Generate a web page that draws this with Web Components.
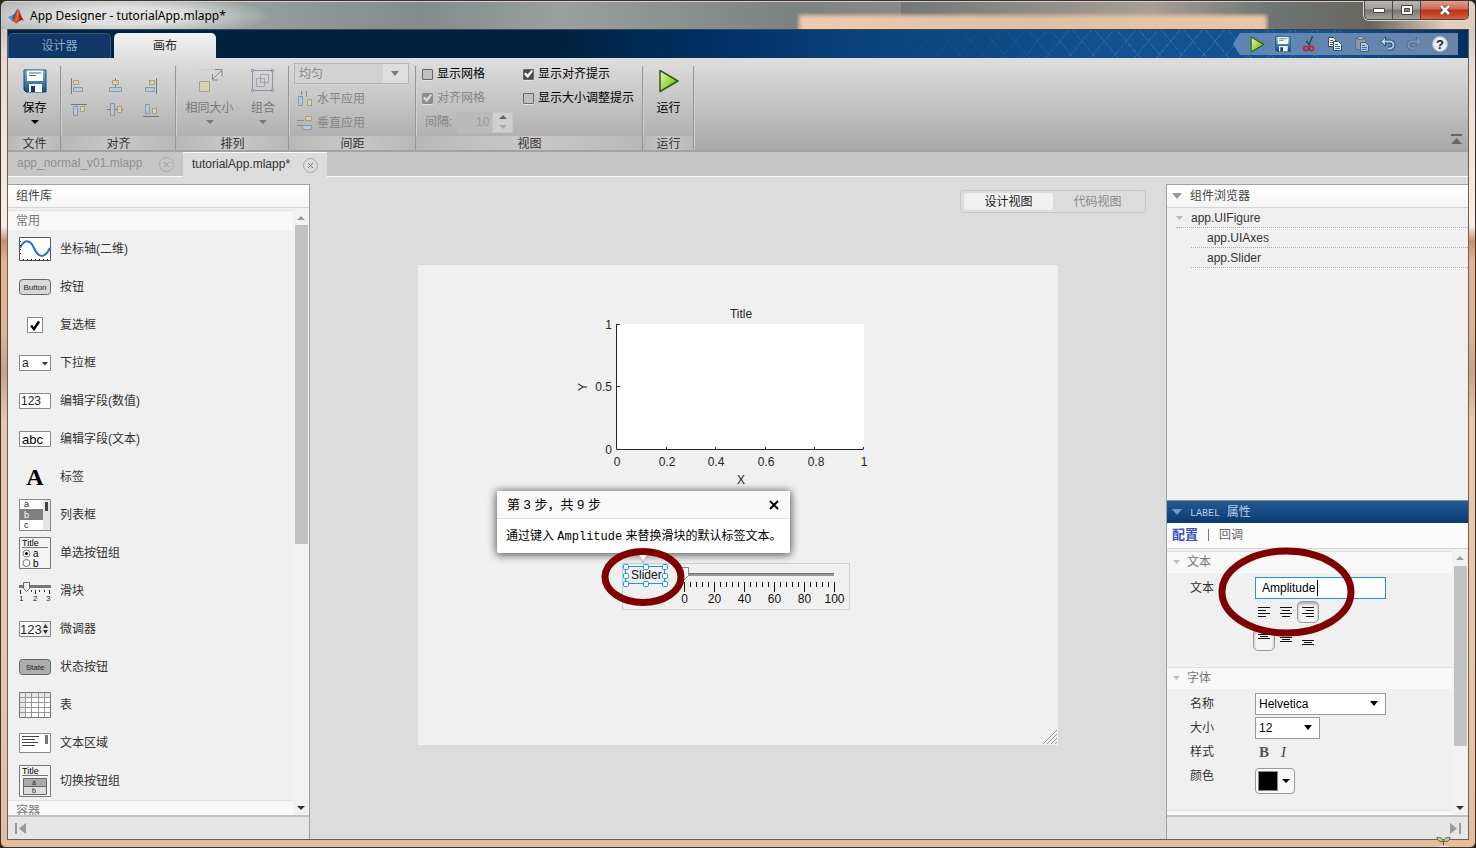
<!DOCTYPE html>
<html lang="zh-CN">
<head>
<meta charset="utf-8">
<title>App Designer - tutorialApp.mlapp*</title>
<style>
  html, body { margin: 0; height: 100%; }
  body {
    font: 12px/16px "Liberation Sans", "Noto Sans CJK SC", sans-serif;
    color: #333;
    overflow: hidden;
    background: #2b2522;
  }
</style>
</head>
<body>
<app-window>
  <title-bar slot="title">App Designer - tutorialApp.mlapp*</title-bar>
  <ribbon-tabs></ribbon-tabs>
  <tool-ribbon></tool-ribbon>
  <doc-tabs></doc-tabs>
  <work-area>
    <component-library slot="left"></component-library>
    <design-canvas></design-canvas>
    <side-stack slot="right"></side-stack>
  </work-area>
</app-window>

<script>
// shared by every shadow root
const base = `
  :host, *, *::before, *::after { box-sizing: border-box; }
  button, input, select { font: inherit; color: inherit; margin: 0; }
  button { padding: 0; border: 0; background: none; }
  svg { display: block; }
  svg text { font-family: "Liberation Sans", sans-serif; }
`;

function define(name, css, html) {
  customElements.define(name, class extends HTMLElement {
    constructor() {
      super();
      const template = document.createElement('template');
      template.innerHTML = `<style>${base}${css}</style>${html}`;
      this.attachShadow({ mode: 'open' }).appendChild(template.content.cloneNode(true));
    }
  });
}

const arrow = (w, h, color) => `<svg width="${w}" height="${h}" viewBox="0 0 ${w} ${h}"><path d="M0 0h${w}L${w / 2} ${h}z" fill="${color}"/></svg>`;
const play = (w, h) => `<svg width="${w}" height="${h}" viewBox="0 0 20 24">
  <defs><linearGradient id="g" x1="0" y1="0" x2="1" y2="1"><stop offset="0" stop-color="#e8f7c0"/><stop offset=".5" stop-color="#a5d751"/><stop offset="1" stop-color="#5aa516"/></linearGradient></defs>
  <path d="M1 1.5 19 12 1 22.500z" fill="url(#g)" stroke="#2c5a16" stroke-width="1.5" stroke-linejoin="round"/></svg>`;
const disk = (s) => `<svg width="${s}" height="${s}" viewBox="0 0 24 24">
  <defs><linearGradient id="d" x1="0" y1="0" x2="0" y2="1"><stop offset="0" stop-color="#7cbde6"/><stop offset="1" stop-color="#174b74"/></linearGradient></defs>
  <path d="M1 1h22v22H3l-2-2z" fill="url(#d)" stroke="#16466d"/>
  <path d="M4 1.500h16V12H4z" fill="#fff"/><path d="M6 4h12M6 6.500h7" stroke="#456a8c" stroke-width="1.200"/>
  <path d="M6 15h13v8H6z" fill="#f4f7fa"/><path d="M8 17h4v6H8z" fill="#123c60"/></svg>`;

define('app-window', `
  :host {
    display: flex; flex-direction: column; height: 100vh;
    border: 1px solid #3b3330; border-radius: 7px 7px 6px 6px; overflow: hidden;
    padding: 0 7px 7px; position: relative;
    background: linear-gradient(#b9bab8 0, #e6dcd4 60px, #f6e9e0 190px, #f9eee6 225px, #c98f69 240px, #e3b38f 260px, #dfb591 330px, #c9a188 370px, #e9c8ad 420px, #e8c6ac 75%, #e4bd9f);
  }
  .frame { flex: 1; min-height: 0; display: flex; flex-direction: column; border: 1px solid #6b6058; border-top-color: #444; background: #dcdcdc; margin: 0 -1px 0 -1px; }
  .sprout { position: absolute; right: 24px; bottom: 0; }
`, `
  <slot name="title"></slot>
  <div class="frame"><slot></slot></div>
  <svg class="sprout" width="15" height="11" viewBox="0 0 15 11">
    <path d="M7.500 10V5" stroke="#7a4b33"/><path d="M7 5.500C2 6 1 3 1 1.500c4-.5 6 1 6 4zM8 5.500c5 .5 6-2.500 6-4-4-.5-6 1-6 4z" fill="#9be08a" stroke="#74543a"/>
    <path d="M1 11c3-2 10-2 13 0z" fill="#efe0dc"/>
  </svg>
`);

define('title-bar', `
  :host {
    display: flex; align-items: center; flex: none; height: 28px; margin: 0 -7px; padding-left: 7px;
    color: #000; font-family: "Noto Sans", sans-serif; position: relative;
    border-top: 1px solid #d9cfca;
    background:
      radial-gradient(ellipse 150px 22px at 120px 14px, #dfe0df 40%, transparent),
      linear-gradient(90deg, #b5b8b8 0, #97a0a0 240px, #838b8c 420px, #9aa0a0 560px, #7b8281 790px, #8b8987 900px, #727776 60%, #a99f95 78%, #6e7674 86%, #68665f 93%, #e3cdbb 98%);
  }
  svg.logo { margin-right: 6px; }
  /* window behind, seen through the glass */
  .behind { position: absolute; left: 54%; right: 14%; top: 11px; bottom: 0; overflow: hidden; }
  .behind::before { content: ""; position: absolute; inset: 2px 2px -8px; background: linear-gradient(90deg, #edcbb0, #dfc0a4 50%, #eac7a9); filter: blur(2px); }
  .buttons { position: absolute; right: 6px; top: -1px; display: flex; border: 1px solid #4c4a48; border-top: 0; border-radius: 0 0 5px 5px; overflow: hidden; box-shadow: 0 0 0 1px #ddd5cf; }
  .buttons button { width: 28px; height: 18px; display: grid; place-items: center; background: linear-gradient(#b9b8b5, #a09d99 45%, #77736f 50%, #a7a19b); border-right: 1px solid #4c4a48; }
  .buttons .close { width: 47px; border: 0; background: linear-gradient(#dd9f8c, #cd6b54 45%, #bb2f19 50%, #d6603c); }
`, `
  <div class="behind"></div>
  <svg class="logo" width="16" height="16" viewBox="0 0 16 16">
    <path d="M0 9 5 7l2 2-3 4z" fill="#4a9ad4"/><path d="M5 7c2-1 3-5 5-6.500L8 9 4 13z" fill="#2c5f9e"/>
    <path d="M10 .5c2 2 3 8 6 12-2-1-3-1-5 1-1 1-2 2-3 2-1-1-2-2-4-2.500C7 11 8.500 4 10 .5z" fill="#d9481c"/>
    <path d="M10 1c-.5 4-1 9-2.500 12C9 12 11 8 10 1z" fill="#f6a63a"/><path d="M10.500 2c1 3 1.500 7 5.500 10.500-2-1-3-.5-4.500.5C12 9 11 5 10.500 2z" fill="#8f1d12"/>
  </svg>
  <slot></slot>
  <div class="buttons">
    <button aria-label="最小化"><svg width="12" height="5"><path d="M.5.500h11v4H.5z" fill="#fff" stroke="#444"/></svg></button>
    <button aria-label="最大化"><svg width="12" height="10"><path d="M.5.500h11v9H.5z" fill="#fff" stroke="#444"/><path d="M3.500 3.500h5v3h-5z" fill="#8a8783" stroke="#444"/></svg></button>
    <button class="close" aria-label="关闭"><svg width="12" height="10" viewBox="0 0 12 10"><path d="M2 1l8 8M10 1 2 9" stroke="#444" stroke-width="4"/><path d="M2 1l8 8M10 1 2 9" stroke="#fff" stroke-width="2.500"/></svg></button>
  </div>
`);

define('ribbon-tabs', `
  :host {
    display: flex; align-items: flex-end; flex: none; height: 28px;
    background:
      linear-gradient(90deg, #00223f 0, #00223f 38%, #003064 48%, #0b447f 60%, rgba(20, 84, 148, 0) 78%, rgba(0, 48, 98, 0) 90%, #002f5f),
      repeating-linear-gradient(50deg, rgba(120, 170, 210, .22) 0 1px, transparent 1px 17px),
      repeating-linear-gradient(-50deg, rgba(120, 170, 210, .22) 0 1px, transparent 1px 17px),
      #135291;
  }
  .tab { width: 102px; height: 25px; border-radius: 5px 5px 0 0; margin-right: 3px; }
  .tab.off { background: #0f3767; color: #92a9c2; border: 1px solid #3a597f; border-bottom: 0; width: 103px; }
  .tab.on { background: linear-gradient(#f3f3f3, #dfdfdf); color: #222; }
  .quick {
    margin: 0 10px 3px auto; width: 225px; height: 22px; padding: 0 8px 0 14px;
    display: flex; align-items: center; justify-content: space-between;
    background: linear-gradient(90deg, #5c86b6, #6a84a8); clip-path: polygon(7px 0, 100% 0, 100% 100%, 7px 100%, 0 50%);
  }
  .quick button { width: 20px; height: 20px; display: grid; place-items: center; }
`, `
  <button class="tab off">设计器</button><button class="tab on">画布</button>
  <div class="quick">
    <button aria-label="运行">${play(15, 17)}</button>
    <button aria-label="保存">${disk(16)}</button>
    <button aria-label="剪切"><svg width="12" height="16" viewBox="0 0 12 16"><path d="M9.500 0 6 9M3.500 5 7 10" stroke="#3c4247" stroke-width="1.500"/><circle cx="3" cy="12.500" r="2.200" fill="none" stroke="#c0202c" stroke-width="1.500"/><circle cx="8.500" cy="12.500" r="2.200" fill="none" stroke="#c0202c" stroke-width="1.500"/></svg></button>
    <button aria-label="复制"><svg width="14" height="14" viewBox="0 0 14 14"><path d="M.5.500h5l2 2v7h-7z" fill="#fff" stroke="#444"/><path d="M2 3.500h3M2 5.500h4M2 7.500h3" stroke="#555"/><path d="M5.500 4.500h5l3 3v6h-8z" fill="#eef6fc" stroke="#234d75"/><path d="M7 7.500h3M7 9.500h5M7 11.500h5" stroke="#2f6ca5"/></svg></button>
    <button aria-label="粘贴" disabled><svg width="14" height="16" viewBox="0 0 14 16"><path d="M.5 2.500h10v11H.5z" fill="#8b9aa8" stroke="#5c6e85"/><path d="M3 .5h5v3H3z" fill="#a4b0be" stroke="#5c6e85"/><path d="M5.500 6.500h5l3 3v6h-8z" fill="#b3c6da" stroke="#446083"/><path d="M7 9.500h3M7 11.500h5M7 13.500h5" stroke="#4b7199"/></svg></button>
    <button aria-label="撤消"><svg width="16" height="14" viewBox="0 0 16 14"><path d="M4 4.500h6a3.500 3.500 0 0 1 0 7H8" fill="none" stroke="#24486e" stroke-width="4"/><path d="M5.500 0v9L.5 4.500z" fill="#b5d9f2" stroke="#24486e"/><path d="M4 4.500h6a3.500 3.500 0 0 1 0 7H8" fill="none" stroke="#a9d0ed" stroke-width="2"/></svg></button>
    <button aria-label="重做" disabled><svg width="16" height="14" viewBox="0 0 16 14"><path d="M12 4.500H6a3.500 3.500 0 0 0 0 7h2" fill="none" stroke="#506f95" stroke-width="4"/><path d="M10.500 0v9l5-4.500z" fill="#7d9cbe" stroke="#506f95"/><path d="M12 4.500H6a3.500 3.500 0 0 0 0 7h2" fill="none" stroke="#7895b8" stroke-width="2"/></svg></button>
    <button aria-label="帮助"><svg width="16" height="16" viewBox="0 0 16 16"><circle cx="8" cy="8" r="7.500" fill="#e6eef5" stroke="#9fb8cd"/><text x="8" y="13" text-anchor="middle" font-size="13" font-weight="bold" fill="#222">?</text></svg></button>
  </div>
`);

define('ribbon-group', `
  :host { display: flex; flex-direction: column; position: relative; }
  :host::after { content: ""; position: absolute; right: -1px; top: 8px; bottom: 0; width: 2px; background: linear-gradient(90deg, #959595 50%, #d2d2d2 50%); }
  .body { flex: 1; min-height: 0; }
  .name { height: 14px; line-height: 17px; overflow: hidden; text-align: center; color: #333; background: linear-gradient(90deg, #b8b8b8, #c8c8c8 50%, #b8b8b8); }
`, `
  <div class="body"><slot></slot></div>
  <div class="name"><slot name="name"></slot></div>
`);

const blue = 'fill="#bcc7d4" stroke="#8798b0"', tan = 'fill="#d6d2b8" stroke="#a59f7c"';
const small = (inner) => `<svg width="16" height="16" viewBox="0 0 16 16">${inner}</svg>`;

define('tool-ribbon', `
  :host {
    display: flex; flex: none; height: 94px; position: relative;
    border-bottom: 2px solid #a2a2a2;
    background: linear-gradient(#dedede, #c9c9c9 40%, #a8a8a8);
  }
  .big { display: flex; flex-direction: column; align-items: center; width: 100%; height: 70px; color: #000; }
  .big .pic { height: 26px; margin: 10px 0 6px; display: grid; place-items: center; }
  .big .arr { height: 4px; margin-top: 4px; }
  .big:disabled { color: #777; }
  .file { width: 53px; } .align { width: 115px; } .arrange { width: 113px; }
  .space { width: 127px; } .view { width: 227px; } .run { width: 51px; }
  .grid { display: grid; grid-template-columns: repeat(3, 36px); grid-auto-rows: 24px; padding-top: 16px; }
  .grid button { display: grid; place-items: center; }
  .two { display: grid; grid-template-columns: 67px 40px; }
  .stack { display: flex; flex-direction: column; padding: 5px 0 0 5px; color: #858585; }
  .pick { position: relative; width: 115px; margin-bottom: 3px; }
  .pick select { appearance: none; width: 100%; height: 21px; padding: 0 4px; border: 1px solid #b4b4b4; border-radius: 0; background: linear-gradient(90deg, #d3d3d3 88px, #dedede 88px); color: #858585; opacity: 1; }
  .pick svg { position: absolute; right: 10px; top: 8px; }
  .act { display: flex; align-items: center; gap: 4px; height: 24px; padding-left: 3px; color: #858585; }
  .checks { display: grid; grid-template-columns: 101px 1fr; grid-auto-rows: 24px; align-items: center; padding: 4px 0 0 6px; color: #000; }
  label { display: flex; align-items: center; gap: 4px; white-space: nowrap; }
  label.dim { color: #858585; }
  input[type=checkbox] { appearance: none; width: 11px; height: 11px; border: 1px solid #666; border-radius: 1px; background: #c0c0c0; box-shadow: 0 1px 0 #e4e4e4; }
  input[type=checkbox]:checked { background: #4b4b4b; }
  input[type=checkbox]:checked::before { content: ""; display: block; height: 9px; background: #fff; clip-path: polygon(0 50%, 20% 32%, 40% 56%, 84% 4%, 100% 20%, 42% 96%); }
  input[type=checkbox]:disabled { background: #8c8c8c; border-color: #8c8c8c; }
  input[type=checkbox]:disabled::before { background: #ddd; }
  .spin { display: flex; align-items: center; padding-left: 3px; color: #858585; }
  .spin input { width: 35px; height: 21px; margin-left: 5px; padding: 0 3px; border: 0; background: #bababa; text-align: right; color: #999; }
  .spin div { display: flex; flex-direction: column; width: 21px; height: 21px; background: #cfcfcf; border: 1px solid #c4c4c4; }
  .spin button { flex: 1; display: grid; place-items: center; }
  .collapse { position: absolute; right: 6px; bottom: 5px; }
`, `
  <ribbon-group class="file">
    <button class="big"><span class="pic">${disk(24)}</span>保存<span class="arr">${arrow(8, 4, '#000')}</span></button>
    <span slot="name">文件</span>
  </ribbon-group>
  <ribbon-group class="align">
    <div class="grid">
      <button aria-label="左对齐" disabled>${small(`<path d="M.5 0v16" stroke="#777"/><path d="M2.500 2.500h5v4h-5z" ${tan}/><path d="M2.500 9.500h9v4h-9z" ${blue}/>`)}</button>
      <button aria-label="居中对齐" disabled>${small(`<path d="M8.500 0v14" stroke="#777"/><path d="M5.500 2.500h6v4h-6z" ${tan}/><path d="M2.500 9.500h12v4h-12z" ${blue}/>`)}</button>
      <button aria-label="右对齐" disabled>${small(`<path d="M13.500 0v16" stroke="#777"/><path d="M6.500 2.500h5v4h-5z" ${tan}/><path d="M2.500 9.500h9v4h-9z" ${blue}/>`)}</button>
      <button aria-label="顶端对齐" disabled>${small(`<path d="M0 2.500h16" stroke="#777"/><path d="M2.500 4.500h4v9h-4z" ${blue}/><path d="M9.500 4.500h4v5h-4z" ${tan}/>`)}</button>
      <button aria-label="中间对齐" disabled>${small(`<path d="M0 7.500h16" stroke="#777"/><path d="M3.500 1.500h4v12h-4z" ${blue}/><path d="M10.500 4.500h4v6h-4z" ${tan}/>`)}</button>
      <button aria-label="底端对齐" disabled>${small(`<path d="M0 14.500h16" stroke="#777"/><path d="M2.500 2.500h4v9h-4z" ${blue}/><path d="M9.500 6.500h4v5h-4z" ${tan}/>`)}</button>
    </div>
    <span slot="name">对齐</span>
  </ribbon-group>
  <ribbon-group class="arrange">
    <div class="two">
      <button class="big" disabled><span class="pic"><svg width="26" height="26" viewBox="0 0 26 26"><path d="M2.500 13.500h10v10h-10z" ${tan}/><path d="M2.500 1.500h22v13" fill="none" stroke="#bbb" stroke-dasharray="1 2"/><path d="M15.500 11.500l9-9M18 1.500h7v7M15.500 6v6H21" fill="none" stroke="#888"/></svg></span>相同大小<span class="arr">${arrow(8, 4, '#777')}</span></button>
      <button class="big" disabled><span class="pic"><svg width="26" height="26" viewBox="0 0 26 26"><path d="M2.500 2.500h20v20h-20z" fill="none" stroke="#8795aa"/><path d="M6.500 10.500h8v8h-8zM10.500 6.500h8v8h-8z" fill="none" stroke="#a2a6aa"/><path d="M1.500 1.500h2v2h-2zM21.500 1.500h2v2h-2zM1.500 21.500h2v2h-2zM21.500 21.500h2v2h-2z" fill="#d3dae3" stroke="#8795aa"/></svg></span>组合<span class="arr">${arrow(8, 4, '#777')}</span></button>
    </div>
    <span slot="name">排列</span>
  </ribbon-group>
  <ribbon-group class="space">
    <div class="stack">
      <div class="pick"><select aria-label="间距" disabled><option>均匀</option></select>${arrow(8, 5, '#777')}</div>
      <button class="act" disabled>${small(`<path d="M4.500 0v4M9.500 0v6" stroke="#888"/><path d="M1.500 5.500h4v9h-4z" ${blue}/><path d="M10.500 8.500h4v6h-4z" ${tan}/>`)}水平应用</button>
      <button class="act" disabled>${small(`<path d="M0 5.500h7M0 10.500h5" stroke="#888"/><path d="M8.500 1.500h6v4h-6z" ${tan}/><path d="M5.500 10.500h9v4h-9z" ${blue}/>`)}垂直应用</button>
    </div>
    <span slot="name">间距</span>
  </ribbon-group>
  <ribbon-group class="view">
    <div class="checks">
      <label><input type="checkbox">显示网格</label>
      <label><input type="checkbox" checked>显示对齐提示</label>
      <label class="dim"><input type="checkbox" checked disabled>对齐网格</label>
      <label><input type="checkbox">显示大小调整提示</label>
      <div class="spin"><label class="dim" for="gap">间隔:</label><input id="gap" value="10" disabled>
        <div><button aria-label="增加"><svg width="8" height="4"><path d="M0 4h8L4 0z" fill="#666"/></svg></button><button aria-label="减少">${arrow(8, 4, '#aaa')}</button></div></div>
    </div>
    <span slot="name">视图</span>
  </ribbon-group>
  <ribbon-group class="run">
    <button class="big"><span class="pic">${play(20, 24)}</span>运行</button>
    <span slot="name">运行</span>
  </ribbon-group>
  <button class="collapse" aria-label="折叠"><svg width="11" height="11"><path d="M0 0h11v2H0zM0 10h11L5.500 4z" fill="#666"/></svg></button>
`);

define('doc-tabs', `
  :host { display: flex; flex: none; height: 25px; background: #c6c6c6; }
  .tab { display: flex; align-items: center; gap: 9px; padding: 0 9px; color: #8f8f8f; border-bottom: 1px solid #fff; width: 175px; }
  .tab.on { background: #dcdcdc; color: #333; border: 0; border-top: 1px solid #fff; width: 144px; }
  a { color: inherit; text-decoration: none; flex: 1; line-height: 16px; padding-bottom: 2px; }
  .rest { flex: 1; border-bottom: 1px solid #fff; }
`, `
  <div class="tab"><a href="#">app_normal_v01.mlapp</a><button aria-label="关闭"><svg width="15" height="15"><circle cx="7.500" cy="7.500" r="7" fill="none" stroke="#aaa"/><path d="M5 5l5 5M10 5l-5 5" stroke="#999"/></svg></button></div>
  <div class="tab on"><a href="#">tutorialApp.mlapp*</a><button aria-label="关闭"><svg width="15" height="15"><circle cx="7.500" cy="7.500" r="7" fill="none" stroke="#aaa"/><path d="M5 5l5 5M10 5l-5 5" stroke="#777"/></svg></button></div>
  <div class="rest"></div>
`);

define('work-area', `
  :host { flex: 1; min-height: 0; display: grid; grid-template-columns: 302px 1fr 302px; grid-template-rows: 100%; }
`, `<slot name="left"></slot><slot></slot><slot name="right"></slot>`);

define('scroll-rail', `
  :host { display: flex; flex-direction: column; align-items: center; width: 16px; background: #f2f2f2; }
  .end { height: 15px; display: grid; place-items: center; }
  .track { flex: 1; width: 13px; min-height: 0; }
  .thumb { height: var(--thumb, 50%); background: #c1c1c1; }
`, `
  <div class="end"><svg width="8" height="4"><path d="M0 4h8L4 0z" fill="#999"/></svg></div>
  <div class="track"><div class="thumb"></div></div>
  <div class="end">${arrow(8, 4, '#333')}</div>
`);

// palette pictures, all on a 32x32 grid
const pictures = {
  axes: `<path d="M.5 4.500h31v23H.5z" fill="#fff" stroke="#555"/><path d="M1 15C5 6 11 6 15 15s10 12 16 0" fill="none" stroke="#2b70b8" stroke-width="2"/><path d="M4.500 26v2M8.500 26v2M12.500 26v2M16.500 26v2M20.500 26v2M24.500 26v2M28.500 26v2M1 8.500h1M1 12.500h1M1 16.500h1M1 20.500h1" stroke="#222"/>`,
  button: `<rect x=".5" y="8.500" width="31" height="15" rx="3" fill="#d9d9d9" stroke="#666"/><text x="16" y="19" font-size="8" text-anchor="middle" fill="#222">Button</text>`,
  check: `<path d="M8.500 8.500h15v15h-15z" fill="#fff" stroke="#888"/><path d="M12 16.500l3 3.500 5-7.500" fill="none" stroke="#000" stroke-width="2.500"/>`,
  drop: `<path d="M.5 8.500h31v15H.5z" fill="#fff" stroke="#888"/><text x="3" y="20" font-size="12" fill="#222">a</text><path d="M23 15h6l-3 3.500z" fill="#333"/>`,
  number: `<path d="M.5 8.500h31v15H.5z" fill="#fff" stroke="#888"/><text x="2" y="20" font-size="12" fill="#222">123</text>`,
  edit: `<path d="M.5 8.500h31v15H.5z" fill="#fff" stroke="#888"/><text x="3" y="21" font-size="13" fill="#000">abc</text>`,
  label: `<text x="16" y="24" font-size="24" text-anchor="middle" fill="#000" style="font-family:'Liberation Serif',serif;font-weight:bold">A</text>`,
  list: `<path d="M.5.500h31v31H.5z" fill="#fff" stroke="#888"/><path d="M1 10h23v11H1z" fill="#808080"/><path d="M24 1h7v30h-7z" fill="#e4e4e4"/><path d="M26 3h3v9h-3z" fill="#444"/><g font-size="9"><text x="5" y="8" fill="#222">a</text><text x="5" y="19" fill="#fff">b</text><text x="5" y="29" fill="#222">c</text></g>`,
  radio: `<path d="M.5.500h31v31H.5z" fill="#f4f4f4" stroke="#777"/><text x="3" y="9" font-size="9" fill="#000">Title</text><path d="M3 10.500h26" stroke="#777"/><circle cx="7.500" cy="16.500" r="3.500" fill="#fff" stroke="#777"/><circle cx="7.500" cy="16.500" r="1.500"/><circle cx="7.500" cy="26" r="3.500" fill="#fff" stroke="#777"/><g font-size="10"><text x="14" y="20">a</text><text x="14" y="30">b</text></g>`,
  slider: `<path d="M0 10h32v3H0z" fill="#777"/><path d="M4.500 7.500h6v6l-3 3-3-3z" fill="#eee" stroke="#666"/><path d="M1.500 15v4M16.500 15v4M30.500 15v4M12.500 15v2M20.500 15v2M25.500 15v2" stroke="#333"/><g font-size="8" fill="#222"><text x="0" y="26">1</text><text x="14" y="26">2</text><text x="27" y="26">3</text></g>`,
  spinner: `<path d="M.5 8.500h31v15H.5z" fill="#fff" stroke="#888"/><path d="M23 9h8v14h-8z" fill="#e8e8e8"/><text x="1" y="21" font-size="13" fill="#222">123</text><path d="M24 15h5l-2.500-4zM24 17h5l-2.500 4z" fill="#333"/>`,
  state: `<rect x=".5" y="8.500" width="31" height="15" rx="3" fill="#adadad" stroke="#666"/><text x="16" y="19" font-size="8" text-anchor="middle" fill="#222">State</text>`,
  table: `<path d="M.5 3.500h31v25H.5z" fill="#fff" stroke="#777"/><path d="M1 4h30v5H6v19H1z" fill="#e6e6e6"/><path d="M6.500 4v24M12.500 4v24M19.500 4v24M25.500 4v24M1 8.500h30M1 13.500h30M1 18.500h30M1 23.500h30" stroke="#999"/>`,
  area: `<path d="M.5 6.500h31v19H.5z" fill="#fff" stroke="#888"/><path d="M3 9.500h17M3 12.500h13M3 15.500h16M3 18.500h13" stroke="#444"/><path d="M26 8h3v9h-3z" fill="#777"/>`,
  toggle: `<path d="M.5.500h31v31H.5z" fill="#f4f4f4" stroke="#777"/><text x="3" y="9" font-size="9" fill="#000">Title</text><path d="M3 10.500h26" stroke="#777"/><path d="M4.500 13.500h23v8h-23z" fill="#aaa" stroke="#666"/><path d="M4.500 21.500h23v8h-23z" fill="#ddd" stroke="#666"/><g font-size="7" text-anchor="middle" fill="#222"><text x="15" y="20">a</text><text x="15" y="28">b</text></g>`
};

class PaletteItem extends HTMLElement {
  constructor() {
    super();
    this.attachShadow({ mode: 'open' });
  }
  connectedCallback() {
    this.shadowRoot.innerHTML = `
      <style>${base}
        :host { display: flex; align-items: center; gap: 9px; height: 38px; padding-left: 11px; color: #333; }
      </style>
      <svg width="32" height="32" viewBox="0 0 32 32">${pictures[this.getAttribute('picture')]}</svg>
      <span><slot></slot></span>`;
  }
}
customElements.define('palette-item', PaletteItem);

define('component-library', `
  :host { display: flex; flex-direction: column; min-height: 0; margin-top: 7px; border: 1px solid #a0a0a0; border-width: 1px 1px 0 0; background: #f0f0f0; }
  h2 { margin: 0 0 2px; font: inherit; height: 23px; line-height: 23px; padding-left: 8px; background: linear-gradient(#fff, #f5f5f5); border-bottom: 1px solid #d4d4d4; color: #444; flex: none; }
  .body { flex: 1; min-height: 0; display: flex; }
  .items { flex: 1; overflow: hidden; }
  h3 { margin: 0; font: inherit; height: 20px; line-height: 21px; padding-left: 8px; background: #f8f8f8; border-top: 1px solid #e4e4e4; color: #777; }
  scroll-rail { --thumb: 55.5%; }
  .foot { flex: none; height: 24px; border-top: 2px solid #c0c0c0; background: #e6e6e6; display: flex; align-items: center; padding-left: 7px; }
`, `
  <h2>组件库</h2>
  <div class="body">
    <div class="items">
      <h3>常用</h3>
      <palette-item picture="axes">坐标轴(二维)</palette-item>
      <palette-item picture="button">按钮</palette-item>
      <palette-item picture="check">复选框</palette-item>
      <palette-item picture="drop">下拉框</palette-item>
      <palette-item picture="number">编辑字段(数值)</palette-item>
      <palette-item picture="edit">编辑字段(文本)</palette-item>
      <palette-item picture="label">标签</palette-item>
      <palette-item picture="list">列表框</palette-item>
      <palette-item picture="radio">单选按钮组</palette-item>
      <palette-item picture="slider">滑块</palette-item>
      <palette-item picture="spinner">微调器</palette-item>
      <palette-item picture="state">状态按钮</palette-item>
      <palette-item picture="table">表</palette-item>
      <palette-item picture="area">文本区域</palette-item>
      <palette-item picture="toggle">切换按钮组</palette-item>
      <h3>容器</h3>
    </div>
    <scroll-rail></scroll-rail>
  </div>
  <div class="foot"><button aria-label="折叠"><svg width="11" height="11"><path d="M0 0h2v11H0zM11 0v11L4 5.500z" fill="#999"/></svg></button></div>
`);

define('axes-plot', `
  :host { display: block; }
  text { font-size: 12px; fill: #262626; }
`, `
  <svg width="310" height="190" viewBox="0 0 310 190">
    <path d="M47 24h247v125H47z" fill="#fff"/>
    <path d="M46.500 24v125.500h247M47 24.500h3M47 86.500h3M96.500 147v2M145.500 147v2M195.500 147v2M244.500 147v2M293.500 147v2" fill="none" stroke="#262626"/>
    <text x="171" y="18" text-anchor="middle">Title</text>
    <g text-anchor="end"><text x="42" y="29">1</text><text x="42" y="91">0.5</text><text x="42" y="154">0</text></g>
    <g text-anchor="middle">
      <text x="47" y="166">0</text><text x="97" y="166">0.2</text><text x="146" y="166">0.4</text>
      <text x="196" y="166">0.6</text><text x="246" y="166">0.8</text><text x="294" y="166">1</text>
      <text x="171" y="184">X</text><text transform="translate(17 87) rotate(-90)">Y</text>
    </g>
  </svg>
`);

define('slider-widget', `
  :host { display: block; width: 228px; height: 47px; border: 1px solid #cfd3d6; border-left-color: #a9d3f2; }
  input { appearance: none; position: absolute; left: 56px; top: 3px; width: 160px; height: 14px; background: linear-gradient(#777 1px, #999 1px) 5px 6px / 150px 3px no-repeat; }
  input::-webkit-slider-thumb { appearance: none; width: 10px; height: 14px; background: url("data:image/svg+xml,%3Csvg xmlns='http://www.w3.org/2000/svg' width='10' height='14'%3E%3Cpath d='M.5.5h9v8L5 13 .5 8.500z' fill='%23f6f6f6' stroke='%23888'/%3E%3C/svg%3E"); }
  .ticks { position: absolute; left: 50px; top: 18px; }
  .ticks text { font-size: 12px; fill: #111; }
  .label { position: absolute; left: 1px; top: 1px; width: 42px; height: 20px; padding-left: 7px; line-height: 20px; color: #111; }
  .label svg { position: absolute; left: 0; top: 0; overflow: visible; }
`, `
  <input id="s" type="range" min="0" max="100" value="0">
  <svg class="ticks" width="176" height="26" viewBox="0 0 176 26"></svg>
  <label class="label" for="s">Slider<svg width="42" height="20"><path d="M1.500 1.500h39v17h-39z" fill="none" stroke="#1a94e6"/><g class="grips" fill="#fff" stroke="#1a94e6"></g></svg></label>
`);

// ticks every 4 units, a long one with its number every 20
class TickedSlider extends customElements.get('slider-widget') {
  connectedCallback() {
    const root = this.shadowRoot;
    let marks = '';
    for (let v = 0; v <= 100; v += 4) {
      const x = 11.5 + v * 1.5;
      const major = v % 20 === 0;
      marks += `<path d="M${x} 0v${major ? 10 : 5}" stroke="#111"/>`;
      if (major) marks += `<text x="${x}" y="21" text-anchor="middle">${v}</text>`;
    }
    root.querySelector('.ticks').innerHTML = marks;
    let grips = '';
    for (const y of [1.5, 10.5, 18.5]) {
      for (const x of [1.5, 21.5, 40.5]) {
        if (x !== 21.5 || y !== 10.5) grips += `<rect x="${x - 2}" y="${y - 2}" width="5" height="5" rx="1"/>`;
      }
    }
    root.querySelector('.grips').innerHTML = grips;
  }
}
customElements.define('ticked-slider', TickedSlider);

define('coach-tip', `
  :host { display: block; width: 293px; background: #fff; box-shadow: 0 1px 8px 1px rgba(0, 0, 0, .65); color: #000; border-radius: 2px; }
  header { display: flex; justify-content: space-between; align-items: center; height: 28px; padding: 0 11px 0 10px; background: #f9f9f9; border-bottom: 1px solid #e2e2e2; font-size: 13px; }
  p { display: flex; align-items: center; height: 34px; margin: 0; padding: 0 9px; white-space: pre; }
`, `
  <header><slot name="step"></slot><button aria-label="关闭"><svg width="10" height="10"><path d="M1 1l8 8M9 1 1 9" stroke="#000" stroke-width="2"/></svg></button></header>
  <p><span><slot></slot></span></p>
`);

define('design-canvas', `
  :host { display: flex; flex-direction: column; min-width: 0; background: #dcdcdc; }
  .views { align-self: flex-end; display: flex; margin: 13px 20px 52px 0; padding: 2px 3px; border: 1px solid #c6c6c6; border-radius: 3px; }
  .views button { width: 89px; height: 17px; border-radius: 3px; color: #8a8a8a; }
  .views .on { background: #f0f0f0; color: #222; }
  .figure { position: relative; align-self: center; width: 640px; height: 480px; background: #f0f0f0; }
  .figure > * { position: absolute; }
  axes-plot { left: 152px; top: 35px; }
  ticked-slider { left: 204px; top: 298px; }
  coach-tip { left: 79px; top: 226px; }
  code { font-family: "Liberation Mono", monospace; font-size: 12px; line-height: 12px; }
  .tail { left: 219px; top: 289px; }
  .ring { left: 183px; top: 283px; }
  .grip { right: 1px; bottom: 1px; }
`, `
  <div class="views"><button class="on">设计视图</button><button>代码视图</button></div>
  <div class="figure">
    <axes-plot></axes-plot>
    <ticked-slider></ticked-slider>
    <coach-tip><span slot="step">第 3 步，共 9 步</span>通过键入 <code>Amplitude</code> 来替换滑块的默认标签文本。</coach-tip>
    <svg class="ring" width="84" height="58"><ellipse cx="42" cy="29" rx="38" ry="25.500" fill="none" stroke="#800000" stroke-width="7"/></svg>
    <svg class="tail" width="12" height="10"><path d="M2 1 6 9l4-8" fill="#fff" stroke="#aaa"/></svg>
    <svg class="grip" width="14" height="14"><path d="M0 14 14 0M4 14 14 4M8 14l6-6M12 14l2-2" stroke="#999"/></svg>
  </div>
`);

define('component-browser', `
  :host { display: block; min-height: 0; overflow: hidden; border-top: 1px solid #a0a0a0; background: #f0f0f0; }
  h2 { display: flex; align-items: center; gap: 8px; margin: 0; font: inherit; height: 23px; padding-left: 5px; background: linear-gradient(#fff, #f5f5f5); border-bottom: 1px solid #d4d4d4; color: #444; }
  ul { list-style: none; margin: 0; padding: 0; }
  li { display: flex; align-items: center; gap: 8px; height: 20px; margin-left: 9px; border-bottom: 1px dotted #aaa; }
  li.sub { margin-left: 24px; padding-left: 16px; }
`, `
  <h2>${arrow(10, 6, '#999')}组件浏览器</h2>
  <ul>
    <li>${arrow(7, 4, '#bbb')}app.UIFigure</li>
    <li class="sub">app.UIAxes</li>
    <li class="sub">app.Slider</li>
  </ul>
`);

const lines = (rows) => `<svg width="14" height="12">${rows.map(([x, w, y]) => `<path d="M${x} ${y}.500h${w}" stroke="#111"/>`).join('')}</svg>`;

define('property-inspector', `
  :host { display: flex; flex-direction: column; min-height: 0; border-top: 1px solid #8c8c8c; background: #f0f0f0; position: relative; }
  h2 { display: flex; align-items: center; gap: 8px; margin: 0; font: inherit; height: 22px; flex: none; padding-left: 5px; background: linear-gradient(#235a94, #0a3a72); color: #b9cde2; }
  h2 span { font: 10px "Liberation Mono", monospace; }
  nav { display: flex; flex: none; align-items: center; height: 26px; padding-left: 5px; background: #fcfcfc; border-bottom: 1px solid #d6d6d6; }
  nav a { color: #666; text-decoration: none; }
  nav a.on { color: #3b53c4; font-weight: bold; font-size: 13px; padding-right: 10px; margin-right: 10px; border-right: 1px solid #777; line-height: 12px; }
  .body { flex: 1; min-height: 0; display: flex; margin-top: 2px; }
  .sheet { flex: 1; overflow: hidden; }
  h3 { display: flex; align-items: center; gap: 7px; margin: 0; font: inherit; height: 22px; padding-left: 6px; background: #f8f8f8; border-top: 1px solid #e0e0e0; color: #777; }
  .rows { display: grid; grid-template-columns: 65px 1fr; padding: 4px 0 16px 23px; row-gap: 2px; align-items: center; justify-items: start; grid-auto-rows: minmax(22px, auto); }
  .field { position: relative; width: 131px; }
  .field input { width: 100%; height: 22px; padding: 0 6px; border: 1px solid #1a94e6; background: #fff; color: #000; display: block; outline: 0; }
  .caret { position: absolute; left: 62px; top: 3px; width: 1px; height: 16px; background: #000; }
  .set { display: flex; grid-column: 2; margin-left: -2px; }
  .set button { width: 22px; height: 22px; border-radius: 5px; display: grid; place-items: center; }
  .set .on { border: 1px solid #999; background: #f6f6f6; box-shadow: inset 0 2px 3px #aaa; }
  .vert { margin-top: 4px; }
  .pick { position: relative; }
  .pick select { appearance: none; width: 131px; height: 22px; padding: 0 3px; border: 1px solid #999; border-radius: 0; background: #fff; color: #000; display: block; }
  .pick.short select { width: 65px; }
  .pick svg { position: absolute; right: 8px; top: 8px; }
  .style { display: flex; gap: 12px; padding-left: 4px; color: #444; font: 15px/22px "Liberation Serif", serif; }
  .style b { color: #555; }
  .color { display: flex; align-items: center; gap: 4px; width: 40px; height: 26px; padding-left: 2px; border: 1px solid #999; border-radius: 4px; background: #f8f8f8; margin-top: 3px; }
  .color i { width: 20px; height: 20px; background: #000; border: 1px solid #888; }
  .top { align-self: start; line-height: 22px; }
  scroll-rail { --thumb: 77%; }
  .ring { position: absolute; left: 51px; top: 46px; pointer-events: none; }
`, `
  <h2>${arrow(10, 6, '#7799bb')}<div><span>LABEL</span> &nbsp;属性</div></h2>
  <nav><a class="on" href="#">配置</a><a href="#">回调</a></nav>
  <div class="body">
    <div class="sheet">
      <h3>${arrow(7, 4, '#bbb')}文本</h3>
      <div class="rows">
        <label for="text">文本</label>
        <div class="field"><input id="text" value="Amplitude"><span class="caret"></span></div>
        <div class="set">
          <button aria-label="左">${lines([[1, 12, 1], [1, 8, 4], [1, 12, 7], [1, 8, 10]])}</button>
          <button aria-label="中">${lines([[1, 12, 1], [3, 8, 4], [1, 12, 7], [3, 8, 10]])}</button>
          <button class="on" aria-label="右">${lines([[1, 12, 1], [5, 8, 4], [1, 12, 7], [5, 8, 10]])}</button>
        </div>
        <div class="set vert">
          <button class="on" aria-label="上">${lines([[1, 12, 0], [3, 8, 2], [1, 12, 4]])}</button>
          <button aria-label="居中">${lines([[1, 12, 3], [3, 8, 5], [1, 12, 7]])}</button>
          <button aria-label="下">${lines([[1, 12, 6], [3, 8, 8], [1, 12, 10]])}</button>
        </div>
      </div>
      <h3>${arrow(7, 4, '#bbb')}字体</h3>
      <div class="rows">
        <label for="name">名称</label>
        <div class="pick"><select id="name"><option>Helvetica</option></select>${arrow(8, 5, '#000')}</div>
        <label for="size">大小</label>
        <div class="pick short"><select id="size"><option>12</option></select>${arrow(8, 5, '#000')}</div>
        <span>样式</span>
        <div class="style"><button aria-label="粗体"><b>B</b></button><button aria-label="斜体"><i>I</i></button></div>
        <label class="top" for="color">颜色</label>
        <button id="color" class="color"><i></i>${arrow(8, 4, '#000')}</button>
      </div>
      <h3></h3>
    </div>
    <scroll-rail></scroll-rail>
  </div>
  <svg class="ring" width="137" height="90"><ellipse cx="68.500" cy="45" rx="64.500" ry="41" fill="none" stroke="#800000" stroke-width="7"/></svg>
`);

define('side-stack', `
  :host { display: grid; grid-template-rows: 1fr 1fr 24px; min-height: 0; margin-top: 7px; border-left: 1px solid #a0a0a0; }
  .foot { border-top: 2px solid #c0c0c0; background: #e6e6e6; display: flex; align-items: center; justify-content: flex-end; padding-right: 7px; }
`, `
  <component-browser></component-browser>
  <property-inspector></property-inspector>
  <div class="foot"><button aria-label="折叠"><svg width="11" height="11"><path d="M9 0h2v11H9zM0 0v11l7-5.500z" fill="#999"/></svg></button></div>
`);
</script>
</body>
</html>
